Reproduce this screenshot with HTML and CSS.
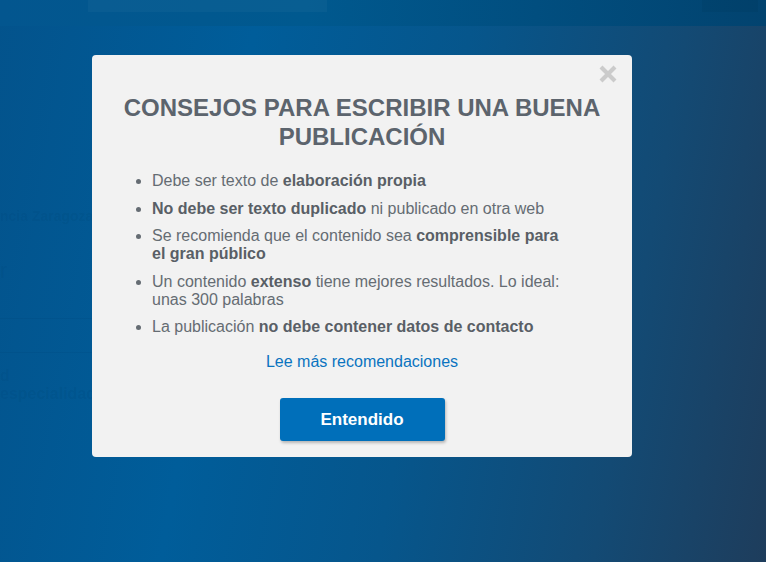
FILE: index.html
```html
<!DOCTYPE html>
<html lang="es">
<head>
<meta charset="utf-8">
<title>Consejos</title>
<link rel="stylesheet" href="styles.css">
</head>
<body>
<div class="page">
  <div class="topbar">
    <div class="topbox"></div>
    <div class="topright"></div>
  </div>
  <div class="ghost">
    <div class="ghost-text g1">ncia Zaragoza</div>
    <div class="ghost-big">r</div>
    <div class="ghost-line l1"></div>
    <div class="ghost-line l2"></div>
    <div class="ghost-text g2">d</div>
    <div class="ghost-text g3">especialidad</div>
  </div>
  <div class="overlay">
    <div class="modal">
      <button class="close" aria-label="Cerrar">
        <svg width="20" height="20" viewBox="0 0 20 20"><path d="M3 3 L17 17 M17 3 L3 17" stroke="#cbcbcb" stroke-width="4.2" stroke-linecap="butt"/></svg>
      </button>
      <h2 class="title">CONSEJOS PARA ESCRIBIR UNA BUENA PUBLICACIÓN</h2>
      <ul class="tips">
        <li>Debe ser texto de <b>elaboración propia</b></li>
        <li><b>No debe ser texto duplicado</b> ni publicado en otra web</li>
        <li>Se recomienda que el contenido sea <b>comprensible para el gran público</b></li>
        <li>Un contenido <b>extenso</b> tiene mejores resultados. Lo ideal: unas 300 palabras</li>
        <li>La publicación <b>no debe contener datos de contacto</b></li>
      </ul>
      <a class="more" href="#">Lee más recomendaciones</a>
      <button class="ok">Entendido</button>
    </div>
  </div>
</div>
</body>
</html>
```
FILE: styles.css
```css
* { box-sizing: border-box; }
html, body { margin: 0; padding: 0; }
body {
  font-family: "Liberation Sans", Arial, sans-serif;
  width: 766px;
  height: 562px;
  overflow: hidden;
}
.page {
  position: relative;
  width: 766px;
  height: 562px;
  background: linear-gradient(100deg, #03538c 0%, #005d9a 30%, #06568c 55%, #134a74 80%, #1e3d5c 100%);
  overflow: hidden;
}
.topbar {
  display: flex;
  justify-content: space-between;
  height: 26px;
  background: linear-gradient(90deg, #03568f 0%, #00598f 40%, #02436f 100%);
}
.topbox {
  margin-left: 88px;
  width: 239px;
  height: 12px;
  background: rgba(255,255,255,0.03);
}
.topright {
  margin-right: 8px;
  width: 56px;
  height: 12px;
  background: rgba(0,0,0,0.04);
}
.ghost {
  position: absolute;
  left: 0;
  top: 0;
  width: 100%;
  height: 100%;
}
.ghost-text {
  position: absolute;
  color: rgba(0,40,80,0.08);
  font-size: 14px;
  font-weight: bold;
  white-space: nowrap;
}
.g1 { left: 0; top: 208px; }
.g2 { left: 0; top: 367px; font-size: 16px; }
.g3 { left: 0; top: 385px; font-size: 16px; }
.ghost-big {
  position: absolute;
  left: 0;
  top: 258px;
  font-size: 22px;
  color: rgba(0,40,80,0.07);
}
.ghost-line {
  position: absolute;
  left: 0;
  width: 92px;
  height: 1px;
  background: rgba(0,30,60,0.06);
}
.l1 { top: 318px; }
.l2 { top: 352px; }
.overlay {
  position: absolute;
  left: 0;
  top: 0;
  width: 100%;
  height: 100%;
}
.modal {
  position: absolute;
  left: 92px;
  top: 55px;
  width: 540px;
  height: 402px;
  background: #f2f2f2;
  border-radius: 4px;
  padding: 38px 36px 16px;
  display: flex;
  flex-direction: column;
  align-items: center;
  color: #5f6770;
}
.close {
  position: absolute;
  right: 14px;
  top: 9px;
  width: 20px;
  height: 20px;
  padding: 0;
  border: 0;
  background: none;
}
.close svg { display: block; }
.title {
  margin: 0 -20px;
  align-self: stretch;
  font-size: 24px;
  line-height: 29px;
  font-weight: bold;
  text-align: center;
  color: #5c646d;
}
.tips {
  margin: 21px 0 0;
  padding: 0 0 0 24px;
  width: 100%;
  list-style: disc;
  font-size: 16px;
  line-height: 18px;
  color: #656c73;
}
.tips li {
  margin-bottom: 9.5px;
  padding-right: 28px;
}
.tips li:last-child { margin-bottom: 0; }
.tips b { color: #595f66; }
.more {
  margin-top: 17px;
  font-size: 16px;
  line-height: 18px;
  color: #0a74c0;
  text-decoration: none;
}
.ok {
  margin-top: 27px;
  width: 165px;
  height: 43px;
  border: 0;
  border-radius: 3px;
  background: #006fba;
  color: #fff;
  font-family: "Liberation Sans", Arial, sans-serif;
  font-weight: bold;
  font-size: 17px;
  box-shadow: 1px 2px 3px rgba(0,0,0,0.25);
}
```
